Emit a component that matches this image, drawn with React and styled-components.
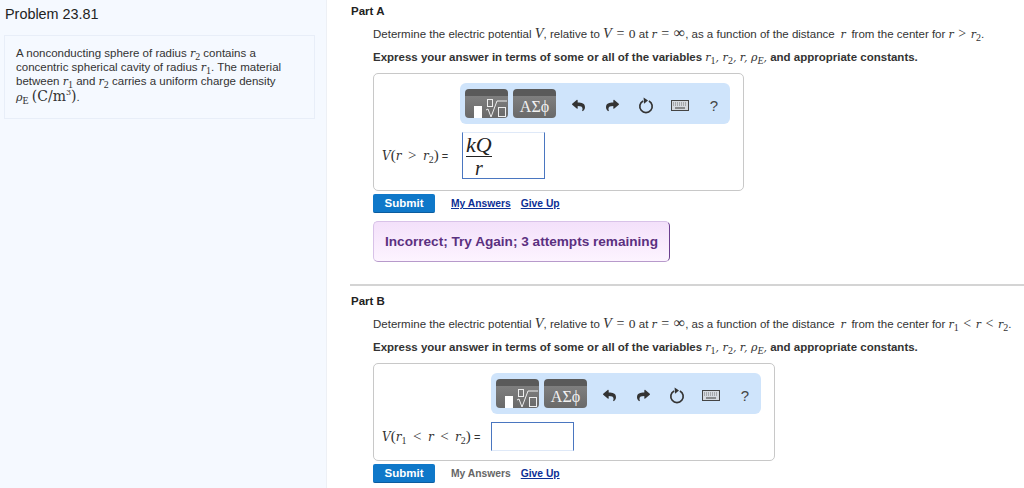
import styled, { createGlobalStyle } from 'styled-components'
import { FaReply, FaShare } from 'react-icons/fa'

const GlobalStyle = createGlobalStyle`
  html, body {
    margin: 0;
    padding: 0;
    background: #fff;
    font-family: "Liberation Sans", Arial, sans-serif;
    color: #333;
  }
  #root {
    height: 488px;
    overflow: hidden;
  }
`

function ToolIcons() {
  return (
    <>
      <IconSlot><FaReply size={13} color="#333" /></IconSlot>
      <IconSlot><FaShare size={13} color="#333" /></IconSlot>
      <IconSlot>
        <svg width="16" height="17" viewBox="0 0 16 17">
          <path d="M10.9 3.9a6.2 6.2 0 1 1-5.8 0" fill="none" stroke="#333" strokeWidth="1.7" />
          <path d="M5.6.6 10 3.6 6 6.8z" fill="#333" />
        </svg>
      </IconSlot>
      <IconSlot>
        <svg width="18" height="11" viewBox="0 0 18 11">
          <rect x=".5" y=".5" width="17" height="10" fill="#d5d9df" stroke="#444" />
          <path d="M2 3h14M2 5h14" stroke="#777" strokeDasharray="1 1" />
          <path d="M4 8h10" stroke="#555" strokeWidth="1.2" />
        </svg>
      </IconSlot>
      <HelpMark>?</HelpMark>
    </>
  )
}

function Toolbar() {
  return (
    <ToolbarBar>
      <ToolButton>
        <svg width="43" height="29" viewBox="0 0 43 29">
          <rect x="9" y="17" width="8" height="12" fill="#fff" />
          <rect x="22.5" y="10.5" width="5" height="7" fill="none" stroke="#eee" />
          <path d="M21 21l2-1 3 8 6-16h10" fill="none" stroke="#eee" />
          <rect x="33.5" y="18.5" width="7" height="9" fill="none" stroke="#eee" />
        </svg>
      </ToolButton>
      <ToolButton><SymbolText>ΑΣϕ</SymbolText></ToolButton>
      <ToolIcons />
    </ToolbarBar>
  )
}

function Variables() {
  return (
    <Express>
      Express your answer in terms of some or all of the variables <M>r</M><Sub>1</Sub><M>, r</M><Sub>2</Sub>
      <M>, r, ρ</M><Sub><SubItalic>E</SubItalic></Sub><M>,</M> and appropriate constants.
    </Express>
  )
}

export default function App() {
  return (
    <Page>
      <GlobalStyle />
      <Sidebar>
        <ProblemTitle>Problem 23.81</ProblemTitle>
        <ProblemPanel>
          A nonconducting sphere of radius <M>r</M><Sub>2</Sub> contains a<br />
          concentric spherical cavity of radius <M>r</M><Sub>1</Sub>. The material<br />
          between <M>r</M><Sub>1</Sub> and <M>r</M><Sub>2</Sub> carries a uniform charge density<br />
          <FormulaLine>
            <M>ρ</M><Sub>E</Sub> <Formula>(C/m<sup>3</sup>)</Formula>.
          </FormulaLine>
        </ProblemPanel>
      </Sidebar>

      <Main>
        <Part>
          <PartTitle>Part A</PartTitle>
          <Question>
            <Prompt>
              Determine the electric potential <BigM>V</BigM>, relative to <BigM>V</BigM><Rel>=</Rel><Upright>0</Upright> at{' '}
              <M>r</M><Rel>=</Rel><Rel $tight>∞</Rel>, as a function of the distance <SpacedM>r</SpacedM> from the center for{' '}
              <M>r</M><Rel>&gt;</Rel><M>r</M><Sub>2</Sub>.
            </Prompt>
            <Variables />
            <AnswerCard $labelWidth={78} $bottom={11}>
              <span />
              <Toolbar />
              <AnswerLabel><M>V</M><Upright>(</Upright><M>r</M><Rel>&gt;</Rel><M>r</M><Sub>2</Sub><Upright>)</Upright> =</AnswerLabel>
              <MathInput $height={47} $offset={2}>
                <Fraction>
                  <Numer>kQ</Numer>
                  <Denom>r</Denom>
                </Fraction>
              </MathInput>
            </AnswerCard>
            <Actions>
              <SubmitButton>Submit</SubmitButton>
              <ActionLink href="#">My Answers</ActionLink>
              <ActionLink href="#">Give Up</ActionLink>
            </Actions>
            <Feedback>Incorrect; Try Again; 3 attempts remaining</Feedback>
          </Question>
        </Part>

        <Divider />

        <Part>
          <PartTitle>Part B</PartTitle>
          <Question>
            <Prompt>
              Determine the electric potential <BigM>V</BigM>, relative to <BigM>V</BigM><Rel>=</Rel><Upright>0</Upright> at{' '}
              <M>r</M><Rel>=</Rel><Rel $tight>∞</Rel>, as a function of the distance <SpacedM>r</SpacedM> from the center for{' '}
              <M>r</M><Sub>1</Sub><Rel>&lt;</Rel><M>r</M><Rel>&lt;</Rel><M>r</M><Sub>2</Sub>.
            </Prompt>
            <Variables />
            <AnswerCard $labelWidth={109} $bottom={9}>
              <span />
              <Toolbar />
              <AnswerLabel><M>V</M><Upright>(</Upright><M>r</M><Sub>1</Sub><Rel>&lt;</Rel><M>r</M><Rel>&lt;</Rel><M>r</M><Sub>2</Sub><Upright>)</Upright> =</AnswerLabel>
              <MathInput $height={29} $offset={0} $paleBottom />
            </AnswerCard>
            <Actions>
              <SubmitButton>Submit</SubmitButton>
              <ActionLink as="span" $disabled>My Answers</ActionLink>
              <ActionLink href="#">Give Up</ActionLink>
            </Actions>
          </Question>
        </Part>
      </Main>
    </Page>
  )
}

const Page = styled.div`
  display: flex;
  width: 1024px;
  height: 488px;
  overflow: hidden;
`

const Sidebar = styled.aside`
  flex: 0 0 327px;
  box-sizing: border-box;
  padding: 6px 11px 0 4px;
  background: #f5f9ff;
  border-right: 1px solid #edf0f5;
`

const ProblemTitle = styled.h1`
  margin: 0 0 12px 1px;
  font-size: 14.4px;
  line-height: 17px;
  font-weight: 400;
  color: #222;
`

const ProblemPanel = styled.div`
  box-sizing: border-box;
  height: 84px;
  padding: 10px 11px 0;
  border: 1px solid #e8eef8;
  font-size: 11.5px;
  line-height: 14px;
  color: #333;
`

const FormulaLine = styled.div`
  height: 18px;
  line-height: 18px;
`

const Formula = styled.span`
  font-family: "DejaVu Serif", serif;
  font-size: 14px;
  line-height: 0;
  color: #333;

  sup {
    font-size: 8px;
    line-height: 0;
  }
`

const Main = styled.main`
  flex: 1;
  min-width: 0;
  padding-top: 4px;
  padding-left: 24px;
`

const Part = styled.section``

const PartTitle = styled.h2`
  margin: 0 0 9px;
  font-size: 11.5px;
  line-height: 14px;
  font-weight: 700;
  color: #222;
`

const Question = styled.div`
  margin-left: 22px;
`

const Prompt = styled.p`
  height: 15px;
  margin: 0 0 8px;
  font-size: 11.5px;
  line-height: 15px;
  white-space: nowrap;
  color: #333;
`

const Express = styled.p`
  height: 15px;
  margin: 0 0 8px;
  font-size: 11.5px;
  line-height: 15px;
  font-weight: 700;
  white-space: nowrap;
  color: #333;
`

const M = styled.span`
  font-family: "DejaVu Serif", serif;
  font-style: italic;
  font-weight: 400;
  font-size: 11px;
  line-height: 0;
`

const SpacedM = styled(M)`
  margin: 0 2.5px;
`

const BigM = styled(M)`
  font-family: "Liberation Serif", serif;
  font-size: 14.5px;
`

const Upright = styled.span`
  font-family: "Liberation Serif", serif;
  font-weight: 400;
  font-size: 13.5px;
  line-height: 0;
`

const Rel = styled(Upright)`
  margin: 0 ${(props) => (props.$tight ? '0' : '4.5px')};
  font-size: ${(props) => (props.$tight ? '16px' : '14px')};
`

const Sub = styled.sub`
  font-family: "Liberation Serif", serif;
  font-weight: 400;
  font-size: 10px;
  line-height: 0;
`

const SubItalic = styled.i`
  font-weight: 400;
`

const AnswerCard = styled.div`
  display: grid;
  grid-template-columns: ${(props) => props.$labelWidth}px auto;
  width: fit-content;
  box-sizing: border-box;
  padding: 9px 13px ${(props) => props.$bottom}px 8px;
  row-gap: 8px;
  align-items: center;
  border: 1px solid #c8c8c8;
  border-radius: 5px;
  background: #fff;
`

const ToolbarBar = styled.div`
  display: flex;
  align-items: center;
  box-sizing: border-box;
  width: 270px;
  height: 41px;
  padding-left: 5px;
  border-radius: 6px;
  background: #cfe4fb;
`

const ToolButton = styled.div`
  display: flex;
  flex: none;
  align-items: flex-end;
  justify-content: center;
  box-sizing: border-box;
  width: 43px;
  height: 29px;
  margin-right: 5px;
  border-radius: 4px;
  background: linear-gradient(#5a5a5a 0, #5a5a5a 7px, #7f7f7f 7px, #696969 100%);
`

const SymbolText = styled.span`
  font-family: "Liberation Serif", serif;
  font-size: 16px;
  line-height: 22px;
  color: #f2f2f2;
`

const IconSlot = styled.div`
  display: flex;
  flex: none;
  align-items: center;
  justify-content: center;
  width: 34px;
  height: 20px;
  margin-top: 3px;
`

const HelpMark = styled(IconSlot)`
  font-size: 15px;
  color: #444;
`

const AnswerLabel = styled.div`
  font-size: 11px;
  color: #333;
  white-space: nowrap;

  ${M} {
    font-size: 12px;
  }

  ${Rel} {
    margin: 0 6.5px;
  }

  ${Upright} {
    font-size: 15px;
  }
`

const MathInput = styled.div`
  display: flex;
  box-sizing: border-box;
  width: 83px;
  height: ${(props) => props.$height}px;
  margin-left: ${(props) => props.$offset}px;
  padding-left: 3px;
  border: 1px solid #4a76c0;
  border-top-color: ${(props) => (props.$paleBottom ? '#4a76c0' : '#dfe9f8')};
  border-bottom-color: ${(props) => (props.$paleBottom ? '#dfe9f8' : '#4a76c0')};
  background: #fff;
`

const Fraction = styled.div`
  display: flex;
  flex-direction: column;
  align-items: center;
  font-family: "Liberation Serif", serif;
  font-style: italic;
  color: #222;
`

const Numer = styled.div`
  font-size: 22px;
  line-height: 23px;
  border-bottom: 1px solid #222;
`

const Denom = styled.div`
  font-size: 20px;
  line-height: 23px;
`

const Actions = styled.div`
  display: flex;
  align-items: center;
  margin-top: 3px;
  font-size: 10.3px;
`

const SubmitButton = styled.button`
  box-sizing: border-box;
  width: 62px;
  height: 19px;
  margin-right: 16px;
  padding: 0;
  border: 0;
  border-bottom: 1px solid #0b5c9e;
  border-radius: 2px;
  background: #0f78c9;
  color: #fff;
  font-family: inherit;
  font-size: 11.5px;
  font-weight: 700;
`

const ActionLink = styled.a`
  margin-right: 10px;
  font-weight: 700;
  color: ${(props) => (props.$disabled ? '#666' : '#0c2f96')};
  text-decoration: ${(props) => (props.$disabled ? 'none' : 'underline')};
`

const Feedback = styled.div`
  box-sizing: border-box;
  width: 297px;
  height: 41px;
  margin-top: 8px;
  border: 1px solid #d8c2e8;
  border-right-color: #6b3f8f;
  border-bottom-color: #b79acb;
  border-radius: 5px;
  background: linear-gradient(#f3e0fa, #fdf4ff);
  color: #5b3080;
  font-size: 13.6px;
  font-weight: 700;
  line-height: 39px;
  text-align: center;
`

const Divider = styled.hr`
  height: 2px;
  margin: 22px 0 8px -1px;
  border: 0;
  background: #d4d4d4;
`
